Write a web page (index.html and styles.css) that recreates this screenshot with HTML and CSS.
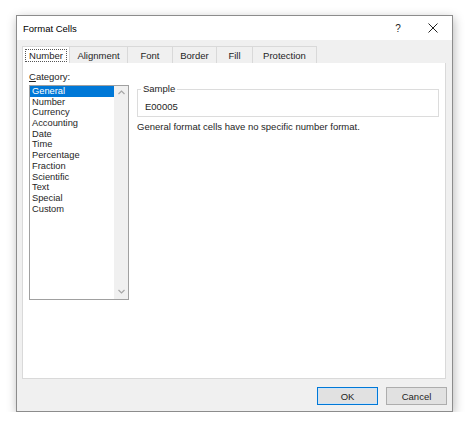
FILE: index.html
```html
<!DOCTYPE html>
<html lang="en">
<head>
<meta charset="utf-8">
<title>Format Cells</title>
<link rel="stylesheet" href="styles.css">
</head>
<body>
<div class="dialog">
  <div class="titlebar">
    <span class="title">Format Cells</span>
    <span class="help">?</span>
    <span class="close"><svg width="10" height="10" viewBox="0 0 10 10"><path d="M0.5 0.5 L9.5 9.5 M9.5 0.5 L0.5 9.5" stroke="#222" stroke-width="1" fill="none"/></svg></span>
  </div>
  <div class="tabs">
    <div class="tab active"><span class="focus">Number</span></div>
    <div class="tab w-align">Alignment</div>
    <div class="tab w-font">Font</div>
    <div class="tab w-border">Border</div>
    <div class="tab w-fill">Fill</div>
    <div class="tab w-prot">Protection</div>
  </div>
  <div class="panel">
    <div class="leftcol">
      <div class="label"><u>C</u>ategory:</div>
      <div class="listbox">
        <ul class="items">
          <li class="sel">General</li>
          <li>Number</li>
          <li>Currency</li>
          <li>Accounting</li>
          <li>Date</li>
          <li>Time</li>
          <li>Percentage</li>
          <li>Fraction</li>
          <li>Scientific</li>
          <li>Text</li>
          <li>Special</li>
          <li>Custom</li>
        </ul>
        <div class="scroll">
          <svg width="7" height="5" viewBox="0 0 7 5"><path d="M0.5 4 L3.5 1 L6.5 4" stroke="#a6a6a6" stroke-width="1.2" fill="none"/></svg>
          <svg width="7" height="5" viewBox="0 0 7 5"><path d="M0.5 1 L3.5 4 L6.5 1" stroke="#a6a6a6" stroke-width="1.2" fill="none"/></svg>
        </div>
      </div>
    </div>
    <div class="rightcol">
      <fieldset class="sample">
        <legend>Sample</legend>
        <div class="value">E00005</div>
      </fieldset>
      <p class="desc">General format cells have no specific number format.</p>
    </div>
  </div>
  <div class="footer">
    <button class="btn default">OK</button>
    <button class="btn">Cancel</button>
  </div>
</div>
</body>
</html>
```
FILE: styles.css
```css
* { box-sizing: border-box; }
html, body { margin: 0; padding: 0; background: #ffffff; }
body {
  padding: 15px 0 0 16px;
  font-family: "Liberation Sans", "Noto Sans", sans-serif;
  font-size: 9.5px;
  color: #1e1e1e;
}
.dialog {
  width: 437px;
  height: 397px;
  border: 1px solid #8c8c8c;
  background: #f0f0f0;
  box-shadow: 1px 3px 10px rgba(0,0,0,0.28);
  display: flex;
  flex-direction: column;
}
.titlebar {
  height: 24px;
  background: #ffffff;
  display: flex;
  align-items: center;
  padding-left: 6px;
}
.title { font-size: 9.5px; flex: 1; color: #000; }
.help { width: 12px; text-align: center; font-size: 10px; margin-right: 24px; color: #222; }
.close { width: 10px; height: 10px; display: flex; margin-right: 14px; }
.tabs {
  display: flex;
  margin: 6px 0 0 5px;
  height: 17px;
}
.tab {
  height: 17px;
  border: 1px solid #d9d9d9;
  border-left: none;
  border-bottom: none;
  background: #f0f0f0;
  display: flex;
  align-items: center;
  justify-content: center;
  line-height: 11px;
}
.tab.active {
  width: 48px;
  background: #ffffff;
  border-left: 1px solid #d9d9d9;
}
.focus {
  border: 1px dotted #555;
  padding: 0 3px;
  height: 13px;
  line-height: 11px;
  display: flex;
  align-items: center;
}
.w-align { width: 58px; }
.w-font { width: 45px; }
.w-border { width: 44px; }
.w-fill { width: 36px; }
.w-prot { width: 64px; }
.panel {
  margin-left: 5px;
  width: 424px;
  height: 316px;
  background: #ffffff;
  border: 1px solid #d9d9d9;
  border-top: none;
  display: flex;
  padding: 8px 0 0 6px;
  gap: 8px;
}
.leftcol { display: flex; flex-direction: column; }
.label { height: 11px; line-height: 11px; margin-bottom: 3px; }
.listbox {
  width: 100px;
  height: 215px;
  border: 1px solid #a0a0a0;
  display: flex;
}
.items {
  list-style: none;
  margin: 0;
  padding: 0;
  flex: 1;
  font-size: 9.3px;
}
.items li {
  height: 10.7px;
  line-height: 10.7px;
  padding-left: 2px;
}
.items li.sel { background: #0078d7; color: #ffffff; }
.scroll {
  width: 14px;
  background: #f0f0f0;
  display: flex;
  flex-direction: column;
  justify-content: space-between;
  align-items: center;
  padding: 4px 0 5px;
}
.rightcol {
  margin-top: 12px;
  display: flex;
  flex-direction: column;
}
.sample {
  margin: 0;
  width: 302px;
  border: 1px solid #dcdcdc;
  padding: 6px 0 3px 3px;
  min-width: 0;
}
.sample legend {
  padding: 0 2px;
  line-height: 12px;
}
.value { line-height: 12px; padding-left: 4px; }
.desc { margin: 4px 0 0; line-height: 12px; }
.footer {
  display: flex;
  justify-content: flex-end;
  gap: 8px;
  padding: 8px 5px 0 0;
}
.btn {
  width: 61px;
  height: 18px;
  font: inherit;
  color: #1e1e1e;
  background: #e1e1e1;
  border: 1px solid #adadad;
  padding: 0;
}
.btn.default { border: 1px solid #0078d7; box-shadow: inset 0 0 0 1px #cfe3f5; }
```
